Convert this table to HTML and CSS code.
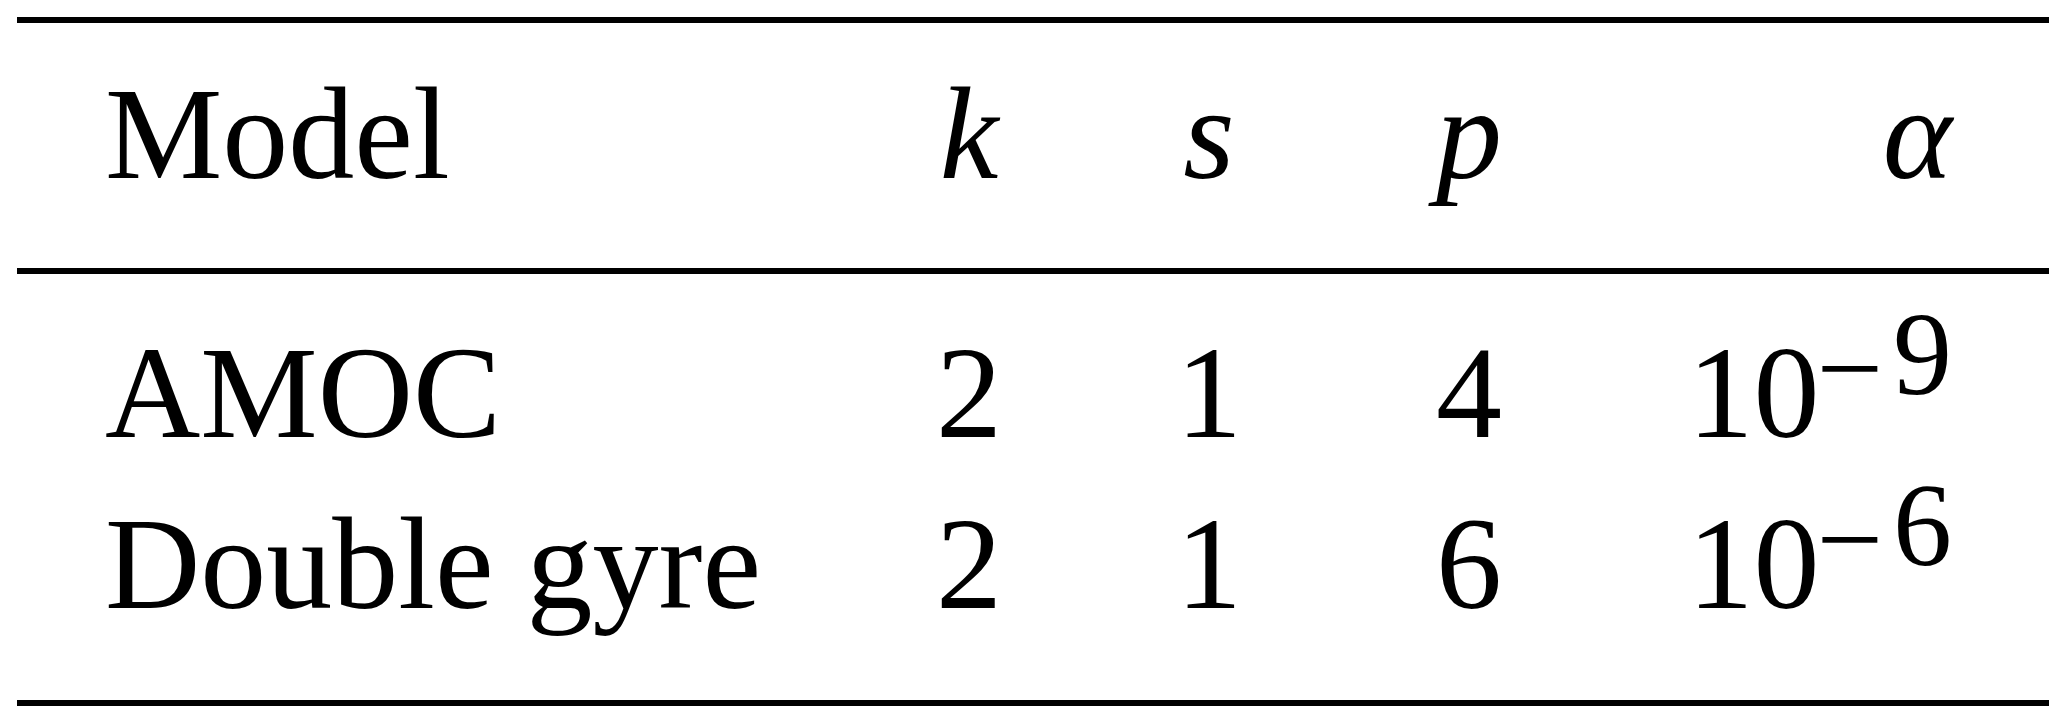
FILE: index.html
```html
<!DOCTYPE html>
<html lang="en">
<head>
<meta charset="utf-8">
<title>Model parameters</title>
<link rel="stylesheet" href="styles.css">
</head>
<body>
<div class="booktab">
  <div class="row head">
    <div class="cell name">Model</div>
    <div class="cell ctr"><i class="var">k</i></div>
    <div class="cell ctr"><i class="var">s</i></div>
    <div class="cell ctr"><i class="var">p</i></div>
    <div class="cell rgt"><i class="var">α</i></div>
  </div>
  <div class="body">
    <div class="row">
      <div class="cell name">AMOC</div>
      <div class="cell ctr">2</div>
      <div class="cell ctr">1</div>
      <div class="cell ctr">4</div>
      <div class="cell rgt">10<span class="sup"><span class="minus">−</span>9</span></div>
    </div>
    <div class="row">
      <div class="cell name">Double gyre</div>
      <div class="cell ctr">2</div>
      <div class="cell ctr">1</div>
      <div class="cell ctr">6</div>
      <div class="cell rgt">10<span class="sup"><span class="minus">−</span>6</span></div>
    </div>
  </div>
</div>
</body>
</html>
```

FILE: styles.css
```css
html, body {
  margin: 0;
  padding: 0;
  background: #ffffff;
}

.booktab {
  margin: 17px 0 0 17px;
  width: 2032px;
  border-top: 6px solid #000;
  border-bottom: 6px solid #000;
  font-family: "Liberation Serif", "Times New Roman", serif;
  font-size: 132px;
  line-height: 132px;
  color: #000;
}

.row {
  display: grid;
  grid-template-columns: 832px 240px 240px 280px 343px;
  padding-right: 97px;
}

.head {
  padding-top: 45px;
  padding-bottom: 68px;
  border-bottom: 6px solid #000;
}

.body {
  display: flex;
  flex-direction: column;
  gap: 39px;
  padding-top: 53px;
  padding-bottom: 70px;
}

.cell {
  white-space: nowrap;
}

.name {
  padding-left: 88px;
}

.ctr {
  text-align: center;
}

.rgt {
  text-align: right;
}

.var {
  font-style: italic;
}

.sup {
  font-size: 118px;
  line-height: 0;
  vertical-align: 43px;
  margin-left: -3px;
}

.minus {
  line-height: 0;
  vertical-align: -14px;
  margin-right: 10px;
}
```
